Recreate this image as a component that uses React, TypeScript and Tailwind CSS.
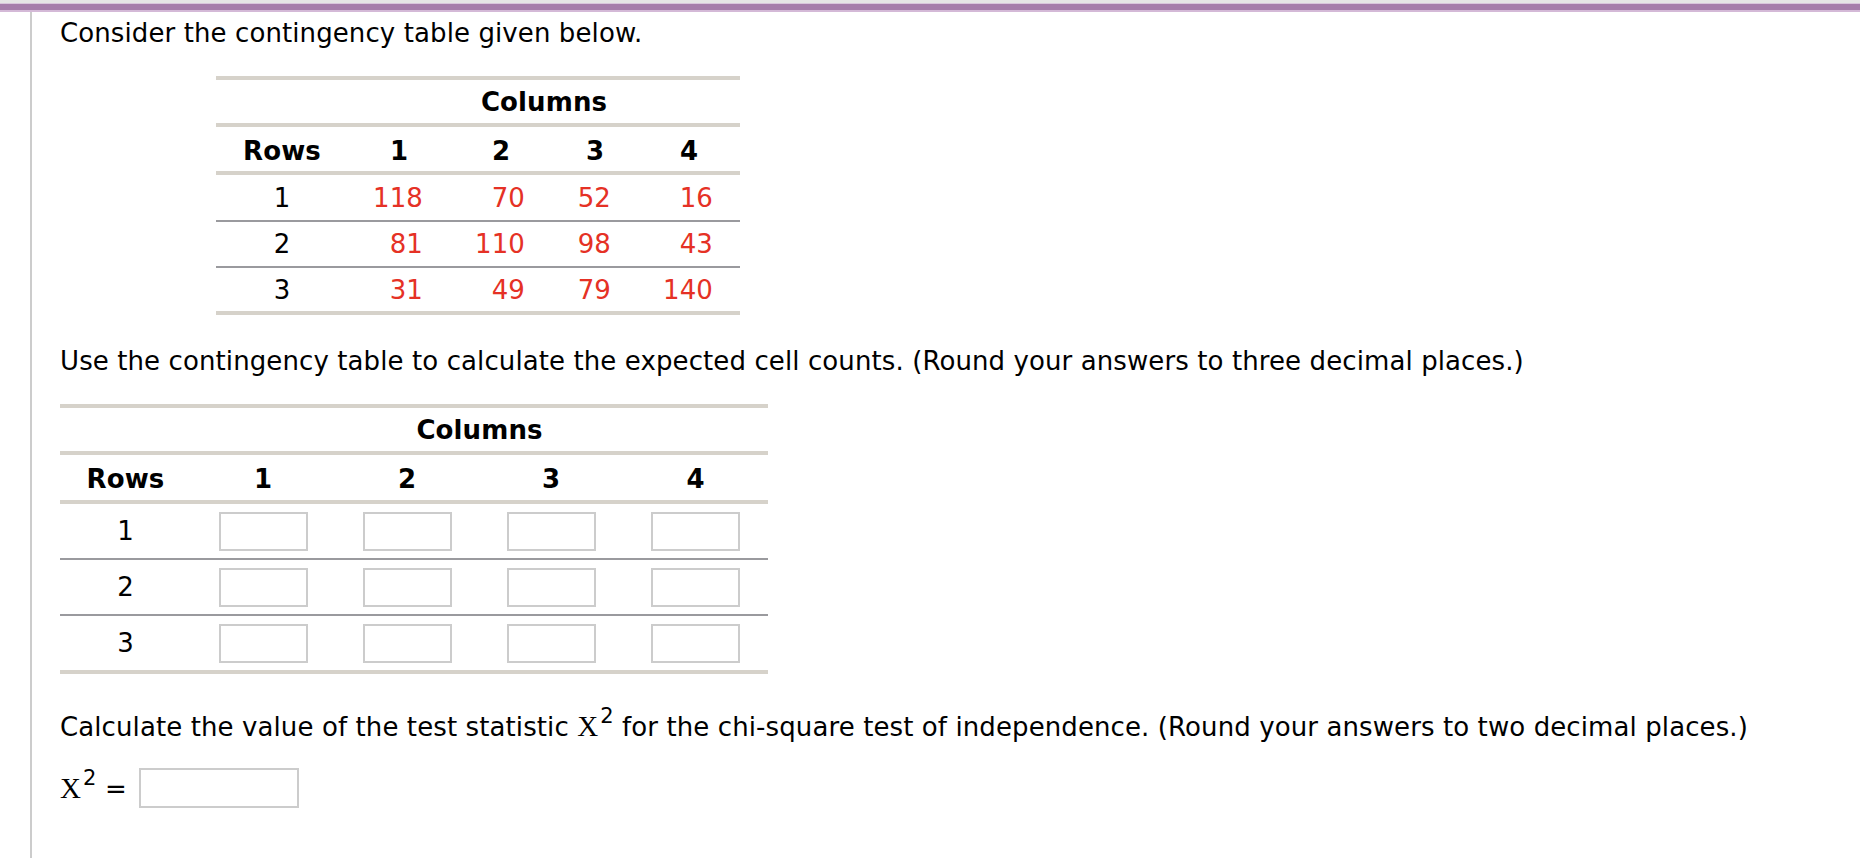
import React from 'react';

const observed = [
  [118, 70, 52, 16],
  [81, 110, 98, 43],
  [31, 49, 79, 140],
];

const beige = 'border-[#d6d2ca]';

const Cell: React.FC = () => (
  <div className="flex justify-center">
    <input type="text" className="w-[89px] h-[39px] border-2 border-[#cccccc] bg-white outline-none" />
  </div>
);

const ObservedTable: React.FC = () => {
  const cols = 'grid grid-cols-[132px_102px_102px_86px_102px] items-center';
  const heights = ['h-[47px]', 'h-[46px]', 'h-[43px]'];
  return (
    <div className={`ml-[156px] mt-[27px] w-[524px] border-t-4 border-b-4 ${beige}`}>
      <div className={`${cols} h-[47px] border-b-4 ${beige}`}>
        <div />
        <div className="col-span-4 text-center font-bold">Columns</div>
      </div>
      <div className={`${cols} h-[48px] border-b-4 ${beige} font-bold text-center pt-[3px]`}>
        <div>Rows</div>
        <div>1</div>
        <div>2</div>
        <div>3</div>
        <div>4</div>
      </div>
      {observed.map((row, i) => (
        <div
          key={i}
          className={`${cols} ${heights[i]} ${i < 2 ? 'border-b-2 border-[#9a9a9e]' : ''}`}
        >
          <div className="text-center">{i + 1}</div>
          {row.map((v, j) => (
            <div key={j} className="text-right pr-[27px] text-[#e53125]">
              {v}
            </div>
          ))}
        </div>
      ))}
    </div>
  );
};

const ExpectedTable: React.FC = () => {
  const cols = 'grid grid-cols-[131px_144px_144px_144px_145px] items-center';
  return (
    <div className={`mt-[27px] w-[708px] border-t-4 border-b-4 ${beige}`}>
      <div className={`${cols} h-[47px] border-b-4 ${beige}`}>
        <div />
        <div className="col-span-4 text-center font-bold">Columns</div>
      </div>
      <div className={`${cols} h-[49px] border-b-4 ${beige} font-bold text-center pt-[2px]`}>
        <div>Rows</div>
        <div>1</div>
        <div>2</div>
        <div>3</div>
        <div>4</div>
      </div>
      {[1, 2, 3].map((r, i) => (
        <div
          key={r}
          className={`${cols} ${i < 2 ? 'h-[56px] border-b-2 border-[#9a9a9e]' : 'h-[54px]'}`}
        >
          <div className="text-center">{r}</div>
          <Cell />
          <Cell />
          <Cell />
          <Cell />
        </div>
      ))}
    </div>
  );
};

const Chi: React.FC = () => (
  <>
    <span className="font-['Liberation_Serif','Times_New_Roman',serif] text-[29px]">X</span>
    <sup className="text-[21px] top-[-13px] ml-[2px]">2</sup>
  </>
);

export default function App() {
  return (
    <div className="min-h-[858px] bg-white text-black text-[26px] leading-[32px] tracking-[0.1px] font-['DejaVu_Sans',Verdana,sans-serif]">
      {/* top rule */}
      <div className="h-[3px] bg-[#e6e6e6]" />
      <div className="h-[1px] bg-[#d9c6dc]" />
      <div className="h-[6px] bg-[#a67eab]" />
      <div className="h-[2px] bg-[#d4b9d7]" />

      <div className="ml-[30px] min-h-[846px] border-l-2 border-[#cccccc] pl-[28px]">
        <p className="pt-[5px]">Consider the contingency table given below.</p>

        <ObservedTable />

        <p className="mt-[30px]">
          Use the contingency table to calculate the expected cell counts. (Round your answers to three
          decimal places.)
        </p>

        <ExpectedTable />

        <p className="mt-[36px]">
          Calculate the value of the test statistic <Chi /> for the chi-square test of independence.
          (Round your answers to two decimal places.)
        </p>

        <div className="mt-[25px] flex items-center h-[40px]">
          <span className="leading-[40px]">
            <Chi /> =
          </span>
          <input
            type="text"
            className="ml-[12px] w-[160px] h-[40px] border-2 border-[#cccccc] bg-white outline-none"
          />
        </div>
      </div>
    </div>
  );
}
